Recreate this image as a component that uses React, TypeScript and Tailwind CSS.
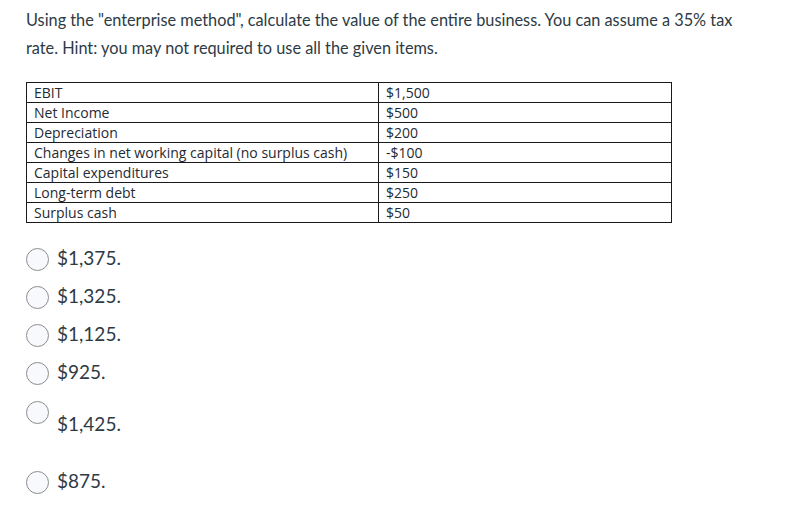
import React from 'react';

const rows: [string, string][] = [
  ['EBIT', '$1,500'],
  ['Net Income', '$500'],
  ['Depreciation', '$200'],
  ['Changes in net working capital (no surplus cash)', '-$100'],
  ['Capital expenditures', '$150'],
  ['Long-term debt', '$250'],
  ['Surplus cash', '$50']
];

const Radio = () => (
  <span className="inline-block w-[23px] h-[23px] rounded-full border border-[#8c8c8c] bg-[#f7f9fc] shrink-0" />
);

const App: React.FC = () => {
  return (
    <div className="w-[810px] h-[512px] bg-white text-[#2d3b45] font-['Lato',sans-serif] overflow-hidden">
      <div className="pl-[26px] pt-[6px]">
        <p className="w-[725px] text-[16.3px] leading-[28px]">
          Using the "enterprise method", calculate the value of the entire business. You can assume a 35% tax
          rate. Hint: you may not required to use all the given items.
        </p>

        <table className="mt-[20px] w-[646px] border-collapse font-['Open_Sans',sans-serif] text-[14px] text-[#1f2a33]">
          <tbody>
            {rows.map(([label, value]) => (
              <tr key={label} className="h-[20px]">
                <td className="w-[352px] border border-[#1a1a1a] pl-[7px] py-0 leading-[18px]">{label}</td>
                <td className="border border-[#1a1a1a] pl-[7px] py-0 leading-[18px]">{value}</td>
              </tr>
            ))}
          </tbody>
        </table>

        <div className="mt-[17px] flex flex-col text-[19px] leading-[22px]">
          {['$1,375.', '$1,325.', '$1,125.', '$925.'].map((t) => (
            <label key={t} className="flex items-center gap-[8px] h-[38px]">
              <Radio />
              <span className="-mt-[3px]">{t}</span>
            </label>
          ))}
          <label className="flex items-start gap-[8px] mt-[9px]">
            <Radio />
            <span className="mt-[12px]">$1,425.</span>
          </label>
          <label className="flex items-center gap-[8px] mt-[36px]">
            <Radio />
            <span className="-mt-[3px]">$875.</span>
          </label>
        </div>
      </div>
    </div>
  );
};

export default App;
